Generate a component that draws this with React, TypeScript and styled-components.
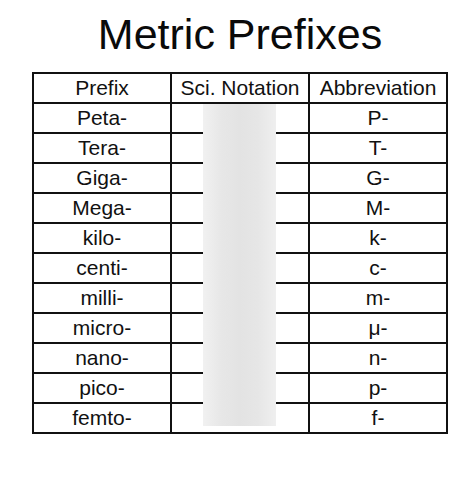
import * as React from "react";
import styled, { createGlobalStyle } from "styled-components";

const GlobalStyle = createGlobalStyle`
	html, body {
		margin: 0;
		padding: 0;
		background: #ffffff;
	}
	body {
		font-family: "Liberation Sans", Arial, sans-serif;
		color: #111111;
	}
`;

const Page = styled.div`
	width: 474px;
	height: 480px;
	display: flex;
	flex-direction: column;
	padding-left: 32px;
	box-sizing: border-box;
`;

const Title = styled.h1`
	margin: 0;
	width: 416px;
	height: 72px;
	padding-top: 10px;
	box-sizing: border-box;
	text-align: center;
	font-size: 43px;
	font-weight: 400;
	line-height: 48px;
	color: #0a0a0a;
`;

const TableWrap = styled.div`
	position: relative;
	width: 416px;
`;

const Table = styled.table`
	border-collapse: collapse;
	table-layout: fixed;
	width: 416px;
`;

const Row = styled.tr`
	height: 30px;
`;

const Cell = styled.td`
	border: 2px solid #111111;
	padding: 0;
	text-align: center;
	vertical-align: middle;
	font-size: 21px;
	line-height: 24px;
	color: #111111;
`;

// redaction smudge over the Sci. Notation column
const Blur = styled.div`
	position: absolute;
	left: 171px;
	top: 32px;
	width: 73px;
	height: 322px;
	background: linear-gradient(
		to right,
		#f1f1f1 0%,
		#e7e7e7 25%,
		#e3e3e3 50%,
		#e6e6e6 75%,
		#efefef 100%
	);
	filter: blur(0.6px);
`;

const rows: [string, string][] = [
	["Peta-", "P-"],
	["Tera-", "T-"],
	["Giga-", "G-"],
	["Mega-", "M-"],
	["kilo-", "k-"],
	["centi-", "c-"],
	["milli-", "m-"],
	["micro-", "μ-"],
	["nano-", "n-"],
	["pico-", "p-"],
	["femto-", "f-"],
];

const App = () => (
	<Page>
		<GlobalStyle />
		<Title>Metric Prefixes</Title>
		<TableWrap>
			<Table>
				<tbody>
					<Row>
						<Cell>Prefix</Cell>
						<Cell>Sci. Notation</Cell>
						<Cell>Abbreviation</Cell>
					</Row>
					{rows.map(([prefix, abbr]) => (
						<Row key={prefix}>
							<Cell>{prefix}</Cell>
							<Cell />
							<Cell>{abbr}</Cell>
						</Row>
					))}
				</tbody>
			</Table>
			<Blur />
		</TableWrap>
	</Page>
);

export default App;
